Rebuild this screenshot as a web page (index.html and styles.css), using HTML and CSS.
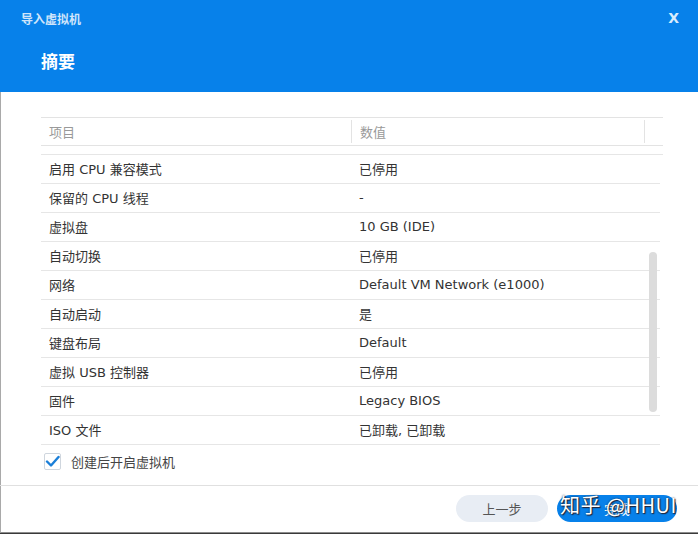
FILE: index.html
```html
<!DOCTYPE html>
<html lang="zh-CN">
<head>
  <meta charset="UTF-8">
  <meta name="viewport" content="width=device-width, initial-scale=1.0">
  <title>导入虚拟机</title>
  <link rel="stylesheet" href="styles.css">
</head>
<body>

  <div class="dialog">

    <!-- CABEÇALHO AZUL -->
    <header class="topo">
      <div class="barra-titulo">
        <span class="titulo">导入虚拟机</span>
        <span class="fechar">X</span>
      </div>
      <h1 class="passo">摘要</h1>
    </header>

    <!-- TABELA DE RESUMO -->
    <section class="conteudo">
      <div class="tabela">
        <div class="cabecalho">
          <div class="col-item">项目</div>
          <div class="col-valor">数值</div>
          <div class="col-extra"></div>
        </div>
        <div class="lista">
          <div class="espaco"></div>
          <div class="linha"><div class="col-item">启用 CPU 兼容模式</div><div class="col-valor">已停用</div></div>
          <div class="linha"><div class="col-item">保留的 CPU 线程</div><div class="col-valor">-</div></div>
          <div class="linha"><div class="col-item">虚拟盘</div><div class="col-valor">10 GB (IDE)</div></div>
          <div class="linha"><div class="col-item">自动切换</div><div class="col-valor">已停用</div></div>
          <div class="linha"><div class="col-item">网络</div><div class="col-valor">Default VM Network (e1000)</div></div>
          <div class="linha"><div class="col-item">自动启动</div><div class="col-valor">是</div></div>
          <div class="linha"><div class="col-item">键盘布局</div><div class="col-valor">Default</div></div>
          <div class="linha"><div class="col-item">虚拟 USB 控制器</div><div class="col-valor">已停用</div></div>
          <div class="linha"><div class="col-item">固件</div><div class="col-valor">Legacy BIOS</div></div>
          <div class="linha"><div class="col-item">ISO 文件</div><div class="col-valor">已卸载, 已卸载</div></div>
          <div class="rolagem"></div>
        </div>
      </div>

      <label class="opcao">
        <span class="caixa">
          <svg width="15" height="15" viewBox="0 0 15 15"><path d="M2 7.5 L6 11.5 L13.5 3" fill="none" stroke="#1a7fd8" stroke-width="2.4" stroke-linecap="round" stroke-linejoin="round"/></svg>
        </span>
        创建后开启虚拟机
      </label>
    </section>

    <!-- RODAPÉ -->
    <footer class="rodape">
      <button class="btn-voltar">上一步</button>
      <button class="btn-concluir">完成</button>
    </footer>

    <div class="marca">知乎 @HHUI</div>
  </div>

</body>
</html>
```

FILE: styles.css
```css
/* === GERAL === */
* { margin: 0; padding: 0; box-sizing: border-box; }
body {
  background-color: #3a3a3a;
  font-family: "DejaVu Sans", "Noto Sans CJK SC", sans-serif;
  font-size: 13px; color: #333;
}
button { cursor: pointer; border: none; font-family: inherit; }

.dialog {
  width: 698px; height: 533px; background-color: #fff; position: relative;
  border-left: 1px solid #a9a9a9; border-bottom: 1px solid #8c8c8c;
}

/* === CABEÇALHO === */
.topo { background-color: #0781ea; height: 92px; margin-left: -1px; }
.barra-titulo {
  display: flex; justify-content: space-between; align-items: center;
  height: 36px; padding: 0 19px 0 21px;
}
.titulo { font-size: 12px; font-weight: 700; color: #cfe5fb; font-family: "Noto Sans CJK SC", sans-serif; }
.fechar { font-size: 14px; font-weight: 700; color: #d9ecfd; font-family: "DejaVu Sans", sans-serif; }
.passo {
  font-size: 17px; font-weight: 700; color: #fff; line-height: 24px;
  padding: 13px 0 0 41px; font-family: "Noto Sans CJK SC", sans-serif;
}

/* === CONTEÚDO === */
.conteudo { padding: 25px 35px 0 40px; }
.tabela { width: 622px; }
.cabecalho {
  display: flex; height: 29px; color: #999;
  border-top: 1px solid #e3e3e3; border-bottom: 1px solid #e3e3e3;
}
.cabecalho > div { display: flex; align-items: center; margin: 2px 0; padding-bottom: 1px; }
.col-item { width: 310px; padding-left: 8px; display: flex; align-items: center; }
.col-valor { flex: 1; padding-left: 8px; display: flex; align-items: center; }
.cabecalho .col-valor { border-left: 1px solid #e3e3e3; }
.cabecalho .col-extra { width: 19px; border-left: 1px solid #e3e3e3; }

.lista { position: relative; }
.espaco { height: 9px; border-bottom: 1px solid #e6e6e6; }
.linha { display: flex; height: 29px; border-bottom: 1px solid #e6e6e6; width: 619px; padding-bottom: 2px; }
.rolagem {
  position: absolute; left: 608px; top: 106px; width: 8px; height: 160px;
  background-color: #dcdcdc; border-radius: 4px;
}

.opcao {
  display: flex; align-items: center; gap: 10px;
  margin: 8px 0 16px 3px; height: 16px; color: #444;
}
.caixa {
  width: 17px; height: 17px; border: 1px solid #cfd6de; border-radius: 2px;
  display: flex; align-items: center; justify-content: center; background: #fff;
}

/* === RODAPÉ === */
.rodape {
  border-top: 1px solid #e0e0e0; display: flex; justify-content: flex-end;
  gap: 9px; padding: 9px 21px 10px 0; margin-left: -1px;
}
.btn-voltar {
  width: 92px; height: 27px; border-radius: 14px; background-color: #e8edf4;
  color: #555; font-size: 13px;
}
.btn-concluir {
  width: 120px; height: 27px; border-radius: 14px; background-color: #0781ea;
  color: #fff; font-size: 13px;
}

/* marca d'água */
.marca {
  position: absolute; left: 559px; top: 490px;
  font-family: "Noto Sans CJK SC", sans-serif; font-size: 20px; color: #fff;
  text-shadow: 0 0 2px #223, 1px 1px 1px #223; letter-spacing: 0.5px;
}
```
